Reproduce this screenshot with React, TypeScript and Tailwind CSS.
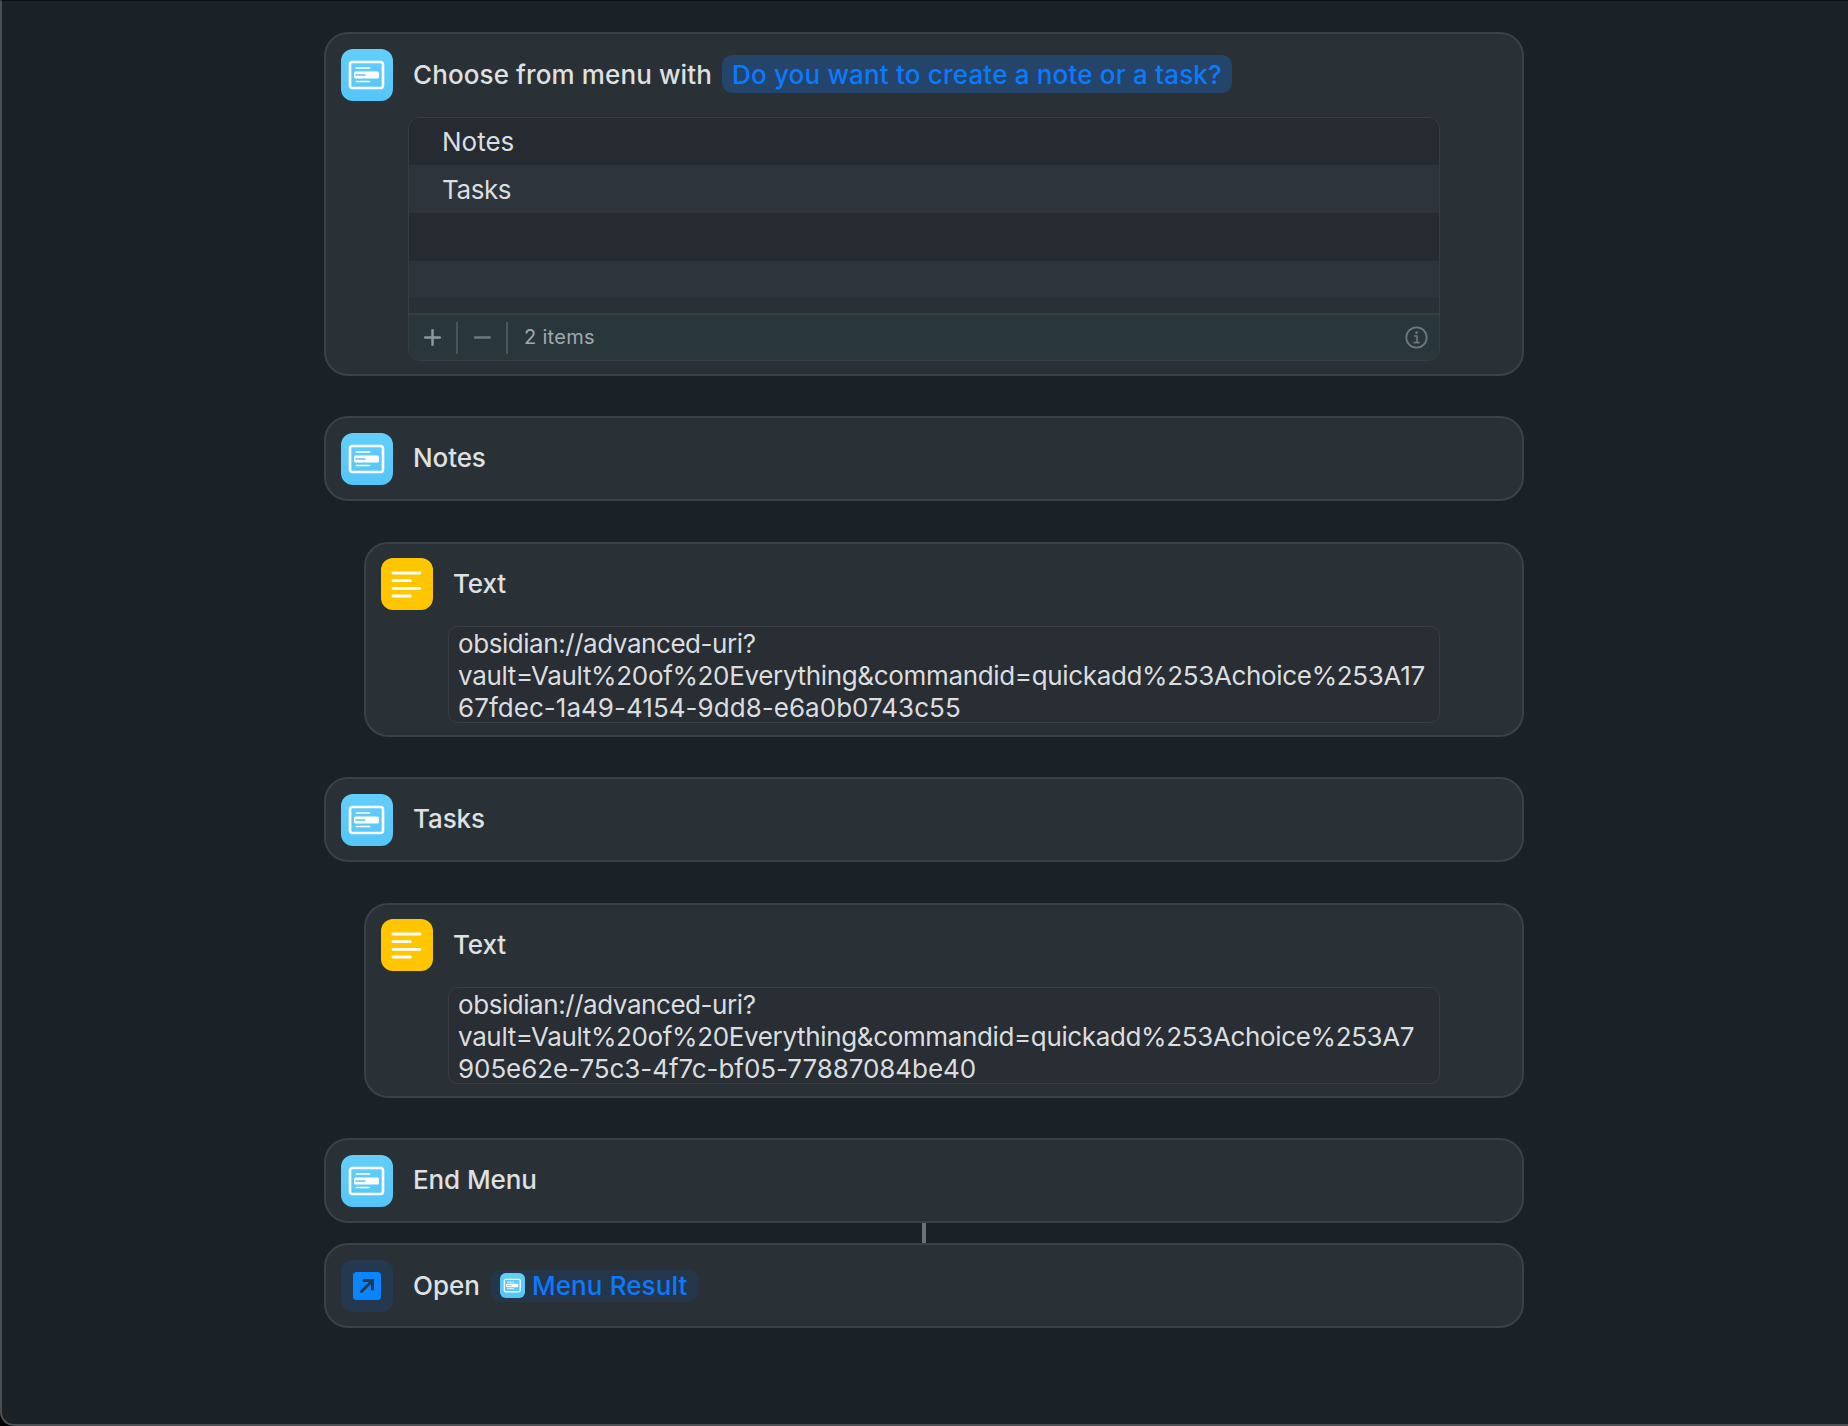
import { Minus, Plus } from "lucide-react";

const font = "font-['Inter',sans-serif]";

function MenuIcon({ size = 52 }: { size?: number }) {
  return (
    <svg width={size} height={size} viewBox="0 0 52 52" className="shrink-0">
      <defs>
        <linearGradient id="menuBlue" x1="0" y1="0" x2="0" y2="1">
          <stop offset="0" stopColor="#64cefb" />
          <stop offset="1" stopColor="#55c5f8" />
        </linearGradient>
      </defs>
      <rect width="52" height="52" rx="12" fill="url(#menuBlue)" />
      <rect x="9" y="13" width="33" height="26" rx="2.5" fill="none" stroke="#fff" strokeWidth="2.6" />
      <path d="M15.5 19h13M15.5 32.5h13" stroke="#fff" strokeWidth="1.7" strokeLinecap="round" />
      <rect x="13" y="22.5" width="25" height="7" rx="1.5" fill="#fff" />
      <path d="M15 26h9" stroke="#5ac8fa" strokeWidth="1.5" strokeLinecap="round" />
    </svg>
  );
}

function TextIcon() {
  return (
    <svg width="52" height="52" viewBox="0 0 52 52" className="shrink-0">
      <rect width="52" height="52" rx="12" fill="#ffc600" />
      <path d="M12 15h27M12 22.7h17.5M12 30.3h27M12 38h17.5" stroke="#fff" strokeWidth="2.8" strokeLinecap="round" />
    </svg>
  );
}

function OpenIcon() {
  return (
    <svg width="52" height="52" viewBox="0 0 52 52" className="shrink-0">
      <rect width="52" height="52" rx="12" fill="#24394f" />
      <rect x="12" y="12" width="28" height="28" rx="3.5" fill="#0a84ff" />
      <path d="M20.5 31.5 31 21M23 20.5h8.5V29" fill="none" stroke="#24394f" strokeWidth="3" strokeLinecap="round" />
    </svg>
  );
}

function InfoIcon() {
  return (
    <svg width="23" height="23" viewBox="0 0 23 23">
      <circle cx="11.5" cy="11.5" r="10.2" fill="none" stroke="#6f787e" strokeWidth="1.8" />
      <circle cx="11.5" cy="6.6" r="1.3" fill="#6f787e" />
      <path d="M9 10h3v6.5M8.6 16.6h6" fill="none" stroke="#6f787e" strokeWidth="1.6" />
    </svg>
  );
}

function Title({ children, className = "" }: { children: React.ReactNode; className?: string }) {
  return <span className={`text-[26px] leading-[32px] font-medium text-[#dfe0e1] ${className}`}>{children}</span>;
}

function HeaderCard({ label }: { label: string }) {
  return (
    <div className="flex h-[85px] items-center gap-[20px] rounded-[24px] border-2 border-[#3b4146] bg-[#2a3136] pl-[15px]">
      <MenuIcon />
      <Title className="mb-[2px] tracking-[-0.1px]">{label}</Title>
    </div>
  );
}

type Line = { text: string; className: string };

function TextCard({ lines }: { lines: Line[] }) {
  return (
    <div className="ml-[40px] flex h-[195px] flex-col rounded-[24px] border-2 border-[#3b4146] bg-[#2a3136] pl-[15px] pt-[14px]">
      <div className="flex items-center gap-[20px]">
        <TextIcon />
        <Title className="tracking-[-0.1px]">Text</Title>
      </div>
      <div className="ml-[67px] mt-[16px] h-[97px] w-[992px] rounded-[10px] border border-[#383e43] bg-[#282e34] pl-[9px] pt-px text-[26px] leading-[32px] text-[#dcdddf]">
        {lines.map((line) => (
          <div key={line.text} className={`whitespace-nowrap ${line.className}`}>
            {line.text}
          </div>
        ))}
      </div>
    </div>
  );
}

export default function App() {
  return (
    <div className={`${font} h-[1426px] w-full bg-black`}>
      <div className="h-full w-full rounded-bl-[14px] border-b-2 border-l-2 border-t border-b-[#4a4f53] border-l-[#4a4f53] border-t-[#0c0f12] bg-[#1a2227] pr-[2px] pt-[31px]">
        <div className="mx-auto flex w-[1200px] flex-col">
          <div className="flex h-[344px] flex-col rounded-[24px] border-2 border-[#3b4146] bg-[#2a3136] pl-[15px] pt-[15px]">
            <div className="flex items-center">
              <MenuIcon />
              <div className="ml-[20px]">
                <Title className="tracking-[0.11px]">Choose from menu with</Title>
              </div>
              <span className="mb-[2px] ml-[10px] flex h-[38px] items-center rounded-[10px] bg-[#24446a] px-[10px] text-[26px] font-medium tracking-[0.18px] text-[#0a7aff]">
                Do you want to create a note or a task?
              </span>
            </div>
            <div className="ml-[67px] mt-[16px] flex h-[244px] w-[1032px] flex-col overflow-hidden rounded-[12px] border border-[#383e43] text-[26px] text-[#dcdddf]">
              <div className="flex h-[47px] items-center bg-[#252b30] pl-[33px]">Notes</div>
              <div className="flex h-[48px] items-center bg-[#2e343b] pl-[33px] tracking-[-0.4px]">Tasks</div>
              <div className="h-[48px] bg-[#252b30]" />
              <div className="h-[36px] bg-[#2e343b]" />
              <div className="h-[16px]" />
              <div className="flex h-[47px] items-center border-t-2 border-[#363e43] bg-[#29363b] text-[20px] tracking-[0.3px] text-[#a2a9ad]">
                <div className="flex w-[47px] justify-center">
                  <Plus size={25} strokeWidth={2.4} className="text-[#8f989d]" />
                </div>
                <div className="h-[32px] w-[2px] bg-[#4d5559]" />
                <div className="flex w-[48px] justify-center">
                  <Minus size={25} strokeWidth={2.4} className="text-[#6f787e]" />
                </div>
                <div className="h-[32px] w-[2px] bg-[#4d5559]" />
                <span className="mb-[2px] ml-[16px]">2 items</span>
                <div className="ml-auto mr-[11px] flex">
                  <InfoIcon />
                </div>
              </div>
            </div>
          </div>

          <div className="mt-[40px]">
            <HeaderCard label="Notes" />
          </div>
          <div className="mt-[41px]">
            <TextCard
              lines={[
                { text: "obsidian://advanced-uri?", className: "tracking-[-0.44px]" },
                { text: "vault=Vault%20of%20Everything&commandid=quickadd%253Achoice%253A17", className: "tracking-[-0.34px]" },
                { text: "67fdec-1a49-4154-9dd8-e6a0b0743c55", className: "tracking-[0.03px]" },
              ]}
            />
          </div>
          <div className="mt-[40px]">
            <HeaderCard label="Tasks" />
          </div>
          <div className="mt-[41px]">
            <TextCard
              lines={[
                { text: "obsidian://advanced-uri?", className: "tracking-[-0.44px]" },
                { text: "vault=Vault%20of%20Everything&commandid=quickadd%253Achoice%253A7", className: "tracking-[-0.36px]" },
                { text: "905e62e-75c3-4f7c-bf05-77887084be40", className: "tracking-[-0.07px]" },
              ]}
            />
          </div>
          <div className="mt-[40px]">
            <HeaderCard label="End Menu" />
          </div>
          <div className="mx-auto h-[20px] w-[4px] bg-[#6d7278]" />
          <div className="flex h-[85px] items-center rounded-[24px] border-2 border-[#3b4146] bg-[#2a3136] pl-[15px]">
            <OpenIcon />
            <div className="ml-[20px]">
              <Title>Open</Title>
            </div>
            <span className="ml-[11px] flex h-[32px] items-center gap-[7px] rounded-[10px] bg-[#25354a] pl-[9px] pr-[12px] text-[26px] font-medium tracking-[0.1px] text-[#0a7aff]">
              <MenuIcon size={25} />
              Menu Result
            </span>
          </div>
        </div>
      </div>
    </div>
  );
}
